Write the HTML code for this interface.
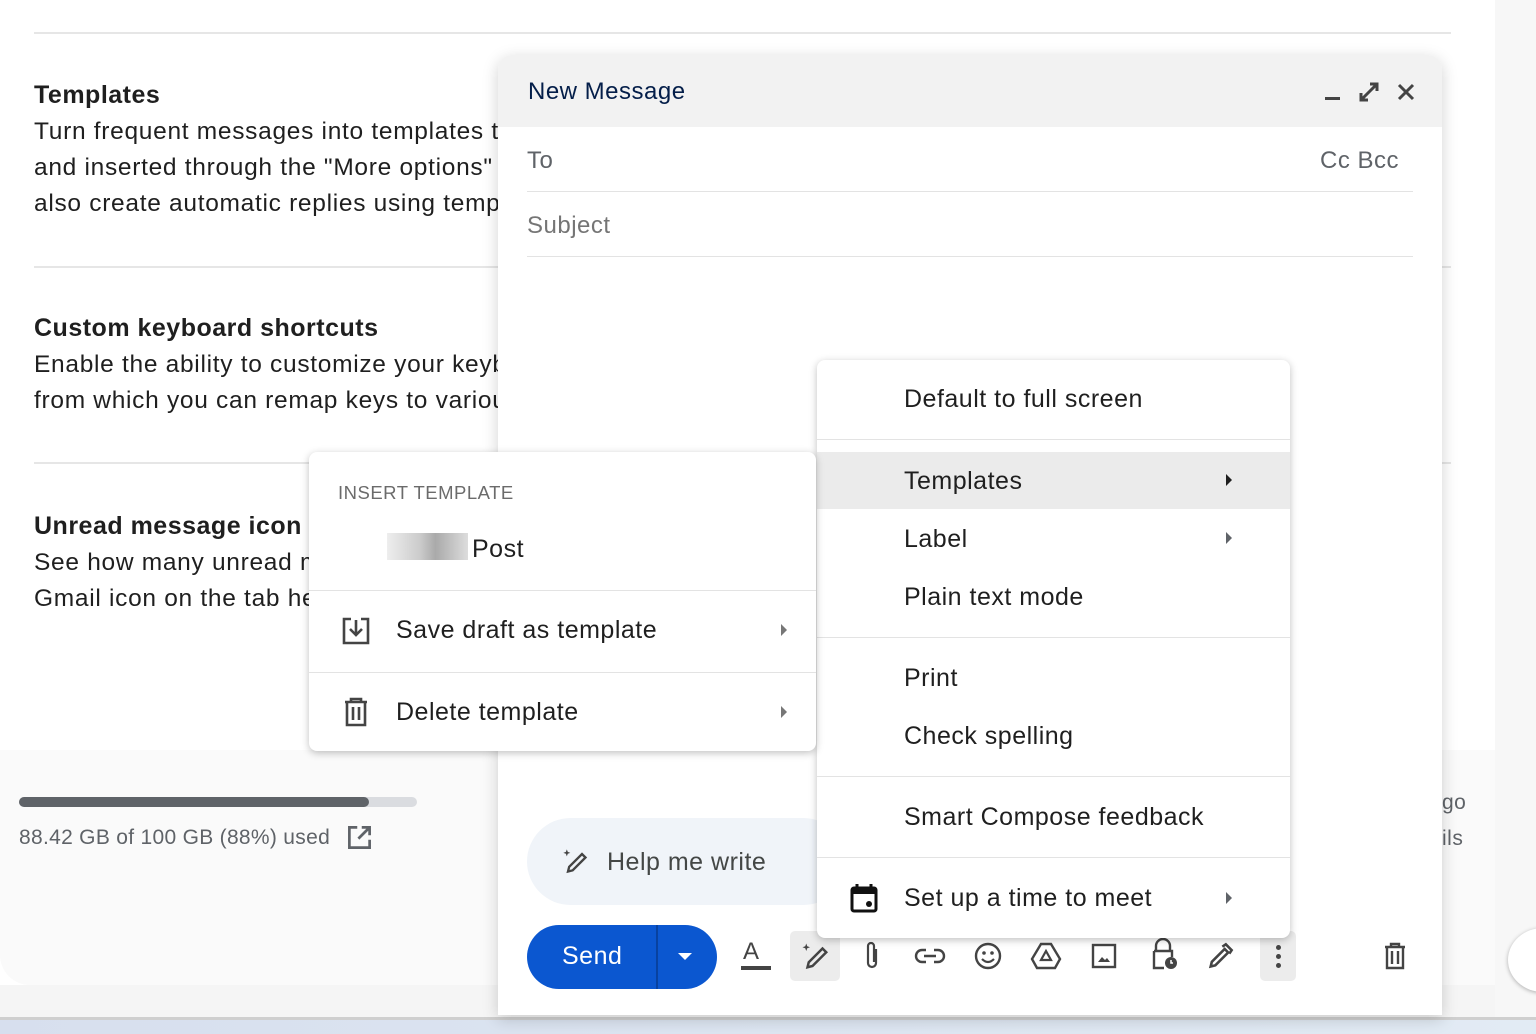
<!DOCTYPE html>
<html><head><meta charset="utf-8"><style>
*{margin:0;padding:0;box-sizing:border-box}
body{width:1536px;height:1034px;overflow:hidden;background:#fff;font-family:"Liberation Sans",Arial,sans-serif;position:relative;color:#1f1f1f;letter-spacing:0.5px}
.a{position:absolute}
.hr{position:absolute;height:2px;background:#e6e6e6}
.h{position:absolute;left:34px;font-size:25px;font-weight:bold;color:#1f1f1f}
.p{position:absolute;left:34px;font-size:24.5px;line-height:36px;color:#1f1f1f;white-space:nowrap;letter-spacing:0.7px}
.mi{position:absolute;left:87px;font-size:25px;color:#1f1f1f;white-space:nowrap}
.arr{position:absolute;width:0;height:0;border-top:6px solid transparent;border-bottom:6px solid transparent;border-left:6px solid #5f6368}
.dv{position:absolute;left:0;right:0;height:1px;background:#e3e3e3}
svg{position:absolute}
</style></head><body>
<div class="a" style="left:1495px;top:0;width:41px;height:1020px;background:#f7f7f7"></div>
<div class="a" style="left:0;top:750px;width:1495px;height:235px;background:#fafafa;border-bottom-left-radius:30px"></div>
<div class="a" style="left:0;top:985px;width:1495px;height:33px;background:#f5f5f5"></div>
<div class="a" style="left:0;top:1017px;width:1536px;height:3px;background:#cfcfcf"></div>
<div class="a" style="left:0;top:1020px;width:1536px;height:14px;background:linear-gradient(90deg,#d7dfee,#e2ebf4)"></div>
<div class="a" style="left:1508px;top:928px;width:70px;height:64px;border-radius:50%;background:#fff;box-shadow:0 1px 4px rgba(0,0,0,.3)"></div>

<div class="hr" style="left:34px;top:32px;width:1417px"></div>
<div class="hr" style="left:34px;top:266px;width:1417px"></div>
<div class="hr" style="left:34px;top:462px;width:1417px"></div>

<div class="h" style="top:81px">Templates</div>
<div class="p" style="top:114px">Turn frequent messages into templates t<br>and inserted through the "More options"<br>also create automatic replies using temp</div>
<div class="h" style="top:314px">Custom keyboard shortcuts</div>
<div class="p" style="top:347px">Enable the ability to customize your keyb<br>from which you can remap keys to variou</div>
<div class="h" style="top:512px">Unread message icon</div>
<div class="p" style="top:545px">See how many unread m<br>Gmail icon on the tab he</div>

<div class="a" style="left:19px;top:797px;width:398px;height:10px;border-radius:5px;background:#dadce0"></div>
<div class="a" style="left:19px;top:797px;width:350px;height:10px;border-radius:5px;background:#5f6368"></div>
<div class="a" style="left:19px;top:826px;font-size:21px;color:#5f6368;letter-spacing:0.3px">88.42 GB of 100 GB (88%) used</div>
<svg style="left:346px;top:824px" width="27" height="27" viewBox="0 0 24 24"><path d="M10 3H3v18h18v-7M14 3h7v7M21 3L11 13" fill="none" stroke="#5f6368" stroke-width="2.4"/></svg>
<div class="a" style="left:1442px;top:791px;font-size:21px;color:#5f6368">go</div>
<div class="a" style="left:1442px;top:827px;font-size:21px;color:#5f6368">ils</div>

<!-- compose -->
<div class="a" style="left:498px;top:55px;width:944px;height:960px;background:#fff;border-radius:14px 14px 0 0;box-shadow:0 4px 16px rgba(0,0,0,.18);overflow:hidden">
 <div class="a" style="left:0;top:0;width:944px;height:72px;background:#f2f2f2"></div>
 <div class="a" style="left:30px;top:23px;font-size:24px;color:#041e49">New Message</div>
 <div class="a" style="left:827px;top:42px;width:15px;height:3px;background:#444"></div>
 <svg style="left:860px;top:26px" width="22" height="22" viewBox="0 0 22 22"><path d="M3 19L19 3M12 3h7v7M3 12v7h7" fill="none" stroke="#444" stroke-width="3"/></svg>
 <svg style="left:898px;top:27px" width="20" height="20" viewBox="0 0 20 20"><path d="M3 3L17 17M17 3L3 17" stroke="#444" stroke-width="3"/></svg>
 <div class="a" style="left:29px;top:92px;font-size:24px;color:#5f6368">To</div>
 <div class="a" style="left:822px;top:92px;font-size:24px;color:#5f6368">Cc Bcc</div>
 <div class="a" style="left:29px;top:136px;width:886px;height:1px;background:#e3e3e3"></div>
 <div class="a" style="left:29px;top:157px;font-size:24px;color:#757575">Subject</div>
 <div class="a" style="left:29px;top:201px;width:886px;height:1px;background:#e3e3e3"></div>
 <div class="a" style="left:29px;top:763px;width:320px;height:87px;border-radius:44px;background:#f0f4f9"></div>
 <svg style="left:63px;top:792px" width="28" height="28" viewBox="0 0 24 24"><path d="M5 2l.8 2.2L8 5l-2.2.8L5 8l-.8-2.2L2 5l2.2-.8z" fill="#444"/><path d="M6 21l1-4L18 6l3 3L10 20z" fill="none" stroke="#444" stroke-width="2"/></svg>
 <div class="a" style="left:109px;top:793px;font-size:25px;color:#444746">Help me write</div>
 <div class="a" style="left:29px;top:870px;width:190px;height:64px;border-radius:32px;background:#0b57d0"></div>
 <div class="a" style="left:158px;top:870px;width:2px;height:64px;background:#0842a0"></div>
 <div class="a" style="left:64px;top:887px;font-size:25px;color:#fff">Send</div>
 <div class="a" style="left:180px;top:898px;border-left:7px solid transparent;border-right:7px solid transparent;border-top:7px solid #fff"></div>
 <div class="a" style="left:245px;top:883px;font-size:24px;color:#444">A</div>
 <div class="a" style="left:243px;top:911px;width:30px;height:4px;background:#444"></div>
 <div class="a" style="left:292px;top:876px;width:50px;height:50px;border-radius:5px;background:#ececec"></div>
 <svg style="left:302px;top:886px" width="30" height="30" viewBox="0 0 24 24"><path d="M5 2l.8 2.2L8 5l-2.2.8L5 8l-.8-2.2L2 5l2.2-.8z" fill="#444"/><path d="M6 21l1-4L18 6l3 3L10 20z" fill="none" stroke="#444" stroke-width="2"/></svg>
 <svg style="left:362px;top:886px" width="24" height="30" viewBox="0 0 24 30"><path d="M16 8v14a4 4 0 0 1-8 0V5a3 3 0 0 1 6 0v16" fill="none" stroke="#444" stroke-width="2.2"/></svg>
 <svg style="left:416px;top:889px" width="32" height="24" viewBox="0 0 32 24"><path d="M12 6H8a6 6 0 0 0 0 12h4M20 6h4a6 6 0 0 1 0 12h-4M10 12h12" fill="none" stroke="#444" stroke-width="2.4"/></svg>
 <svg style="left:475px;top:886px" width="30" height="30" viewBox="0 0 30 30"><circle cx="15" cy="15" r="12" fill="none" stroke="#444" stroke-width="2.4"/><circle cx="11" cy="12" r="1.8" fill="#444"/><circle cx="19" cy="12" r="1.8" fill="#444"/><path d="M9 18q6 6 12 0" fill="none" stroke="#444" stroke-width="2.2"/></svg>
 <svg style="left:532px;top:886px" width="32" height="30" viewBox="0 0 32 30"><path d="M11 3h10l9 15-5 9H7l-5-9z" fill="none" stroke="#444" stroke-width="2.4"/><path d="M16 10l5 9H11z" fill="none" stroke="#444" stroke-width="2.2"/></svg>
 <svg style="left:592px;top:887px" width="28" height="28" viewBox="0 0 28 28"><rect x="3" y="3" width="22" height="22" fill="none" stroke="#444" stroke-width="2.4"/><path d="M8 20l4-5 3 3 2-2 3 4z" fill="#444"/></svg>
 <svg style="left:650px;top:882px" width="32" height="34" viewBox="0 0 32 34"><path d="M8 14V9a7 7 0 0 1 14 0v5M6 14h18v6M6 14v17h10" fill="none" stroke="#444" stroke-width="2.4"/><circle cx="23" cy="26" r="6" fill="#444"/><path d="M23 23v3h2" stroke="#fff" stroke-width="1.5" fill="none"/></svg>
 <svg style="left:708px;top:886px" width="28" height="30" viewBox="0 0 24 24"><path d="M4 21l1-4L16 6l3 3L8 20zM14 4l3-2 5 5-2 3" fill="none" stroke="#444" stroke-width="2.2"/></svg>
 <div class="a" style="left:762px;top:876px;width:36px;height:50px;border-radius:5px;background:#ececec"></div>
 <div class="a" style="left:778px;top:890px;width:5px;height:5px;border-radius:50%;background:#444;box-shadow:0 9px 0 #444,0 18px 0 #444"></div>
 <svg style="left:884px;top:886px" width="26" height="30" viewBox="0 0 26 30"><path d="M3 6h20M9 6V3h8v3M5 6v21h16V6M10 10v13M16 10v13" fill="none" stroke="#444" stroke-width="2.4"/></svg>
</div>

<div class="a" style="left:817px;top:360px;width:473px;height:578px;background:#fff;border-radius:8px;box-shadow:0 2px 8px rgba(0,0,0,.25)">
 <div class="mi" style="top:25px">Default to full screen</div>
 <div class="dv" style="top:79px"></div>
 <div class="a" style="left:0;top:92px;width:473px;height:57px;background:#ebebeb"></div>
 <div class="mi" style="top:107px">Templates</div>
 <div class="arr" style="left:409px;top:114px;border-left-color:#1f1f1f"></div>
 <div class="mi" style="top:165px">Label</div>
 <div class="arr" style="left:409px;top:172px"></div>
 <div class="mi" style="top:223px">Plain text mode</div>
 <div class="dv" style="top:277px"></div>
 <div class="mi" style="top:304px">Print</div>
 <div class="mi" style="top:362px">Check spelling</div>
 <div class="dv" style="top:416px"></div>
 <div class="mi" style="top:443px">Smart Compose feedback</div>
 <div class="dv" style="top:497px"></div>
 <svg style="left:32px;top:522px" width="30" height="32" viewBox="0 0 30 32"><path d="M8 2v5M22 2v5" stroke="#111" stroke-width="3"/><rect x="3" y="6" width="24" height="23" rx="2" fill="none" stroke="#111" stroke-width="3"/><rect x="3" y="6" width="24" height="6" fill="#111"/><circle cx="20" cy="22" r="3" fill="#111"/></svg>
 <div class="mi" style="top:524px">Set up a time to meet</div>
 <div class="arr" style="left:409px;top:532px"></div>
</div>

<div class="a" style="left:309px;top:452px;width:507px;height:299px;background:#fff;border-radius:8px;box-shadow:0 2px 8px rgba(0,0,0,.25)">
 <div class="a" style="left:29px;top:30px;font-size:18.5px;color:#6b6b6b">INSERT TEMPLATE</div>
 <div class="a" style="left:78px;top:81px;width:81px;height:27px;background:linear-gradient(90deg,#eee,#ccc 40%,#aaa 60%,#ddd)"></div>
 <div class="a" style="left:163px;top:83px;font-size:25px;color:#1f1f1f">Post</div>
 <div class="dv" style="top:138px"></div>
 <svg style="left:32px;top:164px" width="30" height="30" viewBox="0 0 30 30"><path d="M10 3H3v24h24V3h-7" fill="none" stroke="#444" stroke-width="2.6"/><path d="M15 4v14M9 13l6 6 6-6" fill="none" stroke="#444" stroke-width="2.6"/></svg>
 <div class="a" style="left:87px;top:164px;font-size:25px">Save draft as template</div>
 <div class="arr" style="left:472px;top:172px;border-left-color:#777"></div>
 <div class="dv" style="top:220px"></div>
 <svg style="left:34px;top:245px" width="26" height="30" viewBox="0 0 26 30"><path d="M2 5h22M8 5V2h10v3M4 5v23h18V5M10 10v13M16 10v13" fill="none" stroke="#444" stroke-width="2.6"/></svg>
 <div class="a" style="left:87px;top:246px;font-size:25px">Delete template</div>
 <div class="arr" style="left:472px;top:254px;border-left-color:#777"></div>
</div>
</body></html>
